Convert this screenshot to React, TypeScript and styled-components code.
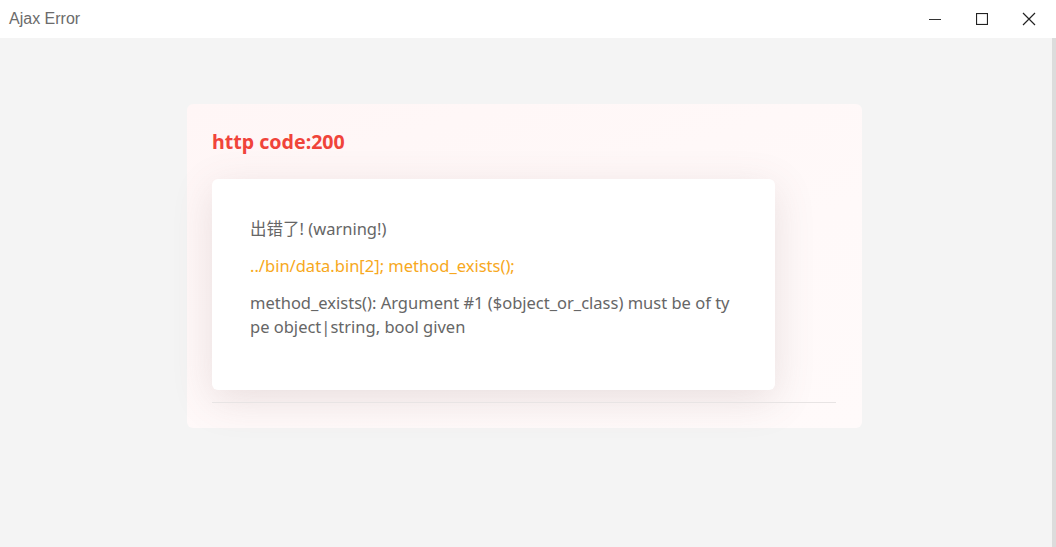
import React from "react";
import styled, { createGlobalStyle } from "styled-components";

const Global = createGlobalStyle`
  html, body {
    margin: 0;
    padding: 0;
    height: 100%;
    overflow: hidden;
  }
  body {
    font-family: "Noto Sans", "Noto Sans CJK SC", sans-serif;
    background: #f4f4f4;
  }
`;

const Window = styled.div`
  display: flex;
  flex-direction: column;
  width: 1056px;
  height: 547px;
`;

const TitleBar = styled.div`
  display: flex;
  align-items: center;
  height: 38px;
  flex: none;
  padding-right: 4px;
  background: #ffffff;
`;

const Title = styled.div`
  flex: 1;
  padding-left: 9px;
  font-family: "Liberation Sans", Arial, sans-serif;
  font-size: 16px;
  color: #6b6b6b;
`;

const WinButton = styled.div`
  width: 47px;
  height: 38px;
  display: flex;
  align-items: center;
  justify-content: center;
  color: #222;
`;

const Body = styled.div`
  flex: 1;
  display: flex;
  background: #f4f4f4;
`;

const Main = styled.div`
  flex: 1;
  padding: 66px 0 0 187px;
`;

const RightEdge = styled.div`
  width: 4px;
  background: #dcdcdc;
`;

const Card = styled.div`
  width: 675px;
  box-sizing: border-box;
  padding: 26px 26px 25px 25px;
  border-radius: 6px;
  background: linear-gradient(160deg, #fff6f6 0%, #fff9f9 60%, #fffafa 100%);
`;

const Code = styled.h2`
  margin: 0 0 25px;
  font-size: 19.6px;
  line-height: 24px;
  font-weight: 700;
  color: #f0443a;
`;

const Panel = styled.div`
  width: 563px;
  box-sizing: border-box;
  padding: 38px 38px 38px 38px;
  background: #ffffff;
  border-radius: 6px;
  box-shadow: 0 10px 40px rgba(120, 90, 90, 0.16);
`;

const Line = styled.p<{ $tone?: "warn" }>`
  margin: 0 0 13px;
  font-size: 16.5px;
  line-height: 24px;
  color: ${(p) => (p.$tone === "warn" ? "#f7a820" : "#666666")};
  word-break: break-all;
`;

const Rule = styled.div`
  height: 1px;
  margin-top: 12px;
  background: #e8e4e4;
`;

export default function App() {
  return (
    <>
      <Global />
      <Window>
        <TitleBar>
          <Title>Ajax Error</Title>
          <WinButton>
            <svg width="12" height="12" viewBox="0 0 12 12">
              <path d="M0 6.5h12" stroke="#333" strokeWidth="1" />
            </svg>
          </WinButton>
          <WinButton>
            <svg width="12" height="12" viewBox="0 0 12 12">
              <rect x="0.5" y="0.5" width="11" height="11" fill="none" stroke="#222" strokeWidth="1.2" />
            </svg>
          </WinButton>
          <WinButton>
            <svg width="14" height="14" viewBox="0 0 14 14">
              <path d="M1 1L13 13M13 1L1 13" stroke="#222" strokeWidth="1.2" />
            </svg>
          </WinButton>
        </TitleBar>
        <Body>
          <Main>
            <Card>
              <Code>http code:200</Code>
              <Panel>
                <Line>出错了! (warning!)</Line>
                <Line $tone="warn">../bin/data.bin[2]; method_exists();</Line>
                <Line>
                  method_exists(): Argument #1 ($object_or_class) must be of type object|string, bool given
                </Line>
              </Panel>
              <Rule />
            </Card>
          </Main>
          <RightEdge />
        </Body>
      </Window>
    </>
  );
}
